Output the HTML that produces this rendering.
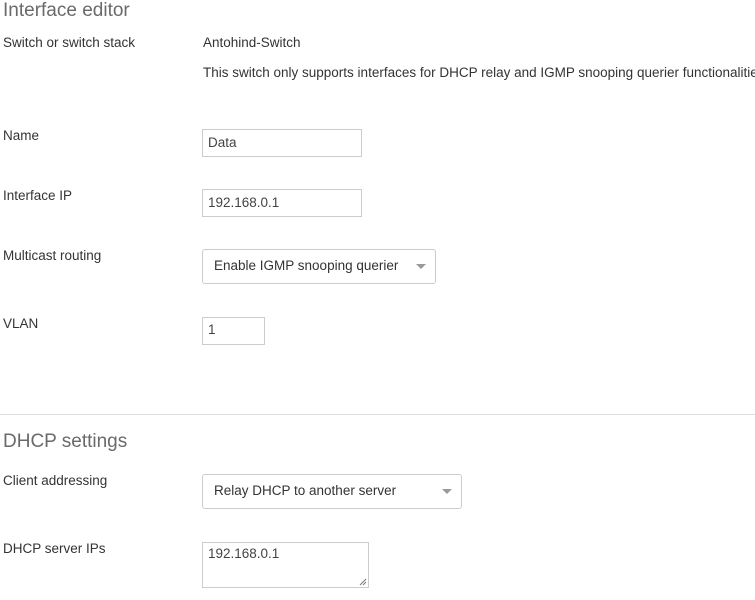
<!DOCTYPE html>
<html><head><style>
body{margin:0;width:755px;height:600px;overflow:hidden;background:#fff;font-family:"Liberation Sans",sans-serif;font-size:13.5px;color:#333;position:relative}
.a{position:absolute;white-space:nowrap}
.t{font-size:19px;color:#6a6a6d}
.l{line-height:16px}
.box{position:absolute;border:1px solid #ccc;box-sizing:border-box;background:#fff;font-size:13.5px;color:#444;padding-left:5px}
.sel{position:absolute;border:1px solid #ccc;border-radius:3px;box-sizing:border-box;padding-left:11px;color:#333}
.arr{position:absolute;width:0;height:0;border-left:5px solid transparent;border-right:5px solid transparent;border-top:5px solid #999}
</style></head><body>
<div class="a t" style="left:3px;top:0px;line-height:22px">Interface editor</div>
<div class="a l" style="left:3px;top:35px">Switch or switch stack</div>
<div class="a l" style="left:203px;top:35px">Antohind-Switch</div>
<div class="a l" style="left:203px;top:65px">This switch only supports interfaces for DHCP relay and IGMP snooping querier functionalities.</div>
<div class="a l" style="left:3px;top:128px">Name</div>
<div class="box" style="left:202px;top:129px;width:160px;height:28px;line-height:25px">Data</div>
<div class="a l" style="left:3px;top:188px">Interface IP</div>
<div class="box" style="left:202px;top:189px;width:160px;height:28px;line-height:25px">192.168.0.1</div>
<div class="a l" style="left:3px;top:248px">Multicast routing</div>
<div class="sel" style="left:202px;top:249px;width:234px;height:35px;line-height:32px">Enable IGMP snooping querier<div class="arr" style="left:213px;top:14px"></div></div>
<div class="a l" style="left:3px;top:316px">VLAN</div>
<div class="box" style="left:202px;top:317px;width:63px;height:28px;line-height:23px;padding-left:5px">1</div>
<div class="a" style="left:0;top:414px;width:755px;height:1px;background:#ddd"></div>
<div class="a t" style="left:3px;top:431px;line-height:22px">DHCP settings</div>
<div class="a l" style="left:3px;top:473px">Client addressing</div>
<div class="sel" style="left:202px;top:474px;width:260px;height:35px;line-height:32px">Relay DHCP to another server<div class="arr" style="left:239px;top:14px"></div></div>
<div class="a l" style="left:3px;top:541px">DHCP server IPs</div>
<div class="box" style="left:202px;top:542px;width:167px;height:46px;line-height:21px">192.168.0.1
<svg style="position:absolute;right:1px;bottom:1px" width="8" height="8"><path d="M7 1L1 7M7 4L4 7" stroke="#777" stroke-width="1"/></svg></div>
</body></html>
